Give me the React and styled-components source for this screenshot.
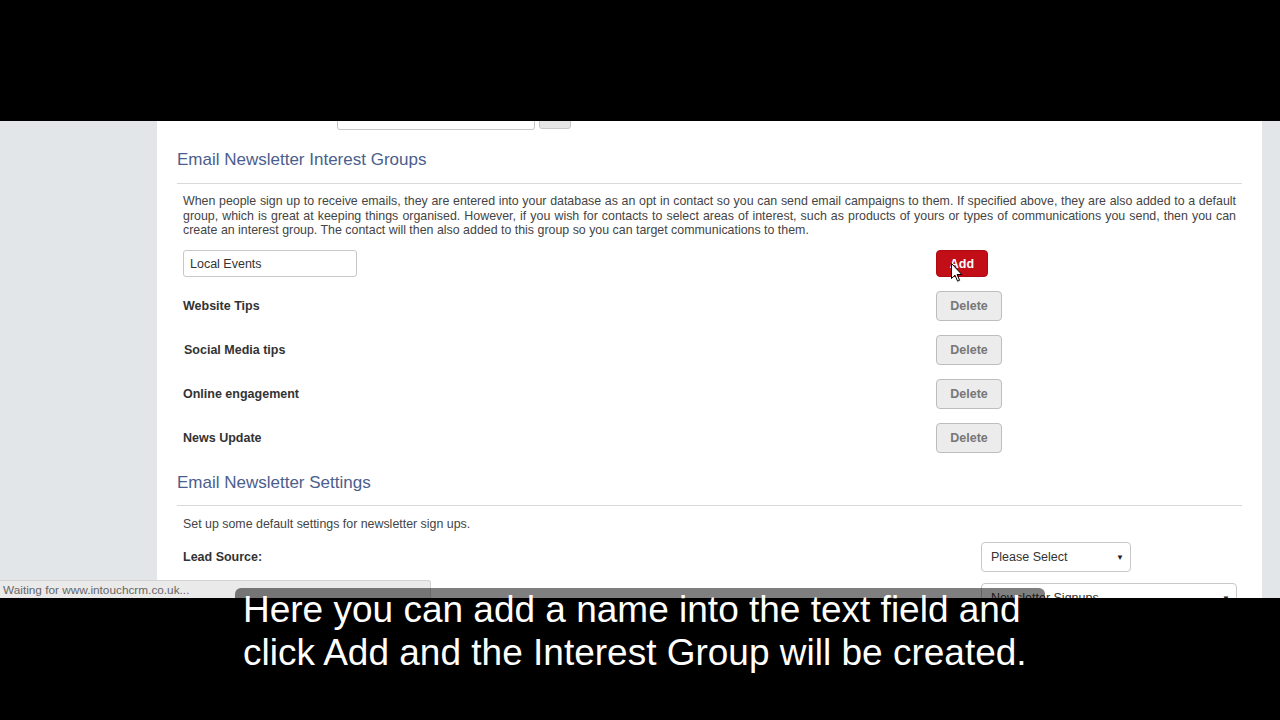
import React from "react"
import styled, { createGlobalStyle } from "styled-components"

const GlobalStyle = createGlobalStyle`
  html, body {
    margin: 0;
    padding: 0;
    background: #000;
  }
  * { box-sizing: border-box; }
`

const Frame = styled.div`
  position: relative;
  width: 1280px;
  height: 720px;
  overflow: hidden;
  display: flex;
  flex-direction: column;
  background: #000;
  font-family: "Liberation Sans", Arial, sans-serif;
`

const TopBar = styled.div`
  height: 121px;
  flex-shrink: 0;
  background: #000;
`

const Viewport = styled.div`
  position: relative;
  height: 477px;
  flex-shrink: 0;
  overflow: hidden;
  background: #e3e6e9;
  display: flex;
`

const Sidebar = styled.div`
  width: 157px;
  flex-shrink: 0;
`

const Panel = styled.div`
  width: 1105px;
  margin-top: -19px;
  background: #fff;
  padding: 0 20px;
  align-self: flex-start;
`

const Row = styled.div`
  display: grid;
  grid-template-columns: ${p => p.$labelWidth || 753}px auto;
  align-items: center;
  padding: 0 6px;
  height: ${p => p.$h || 30}px;
  margin-top: ${p => p.$mt || 0}px;
`

const TopLabel = styled.div`
  font-size: 12.5px;
  font-weight: bold;
  color: #333;
  transform: translateY(-10px);
`

const TopInput = styled.div`
  display: flex;
  gap: 4px;
`

const Heading = styled.h2`
  margin: ${p => p.$mt}px 0 0;
  font-size: 17px;
  line-height: 20px;
  font-weight: normal;
  color: #4b5e8d;
`

const Rule = styled.div`
  height: 1px;
  margin-top: ${p => p.$mt || 13}px;
  background: #d9d9d9;
`

const Para = styled.div`
  margin-top: ${p => p.$mt}px;
  padding: 0 6px;
  font-size: 12.4px;
  line-height: 14.5px;
  color: #444;
`

const Line = styled.div`
  text-align: justify;
  text-align-last: ${p => (p.$last ? "left" : "justify")};
  white-space: nowrap;
`

const TextBox = styled.div`
  width: ${p => p.$w}px;
  height: ${p => p.$h || 27}px;
  border: 1px solid #c8c8c8;
  border-radius: 3px;
  background: #fff;
  font-size: 12.5px;
  color: #333;
  display: flex;
  align-items: center;
  padding: 0 6px;
`

const GreyBtn = styled.div`
  width: 32px;
  height: 27px;
  border: 1px solid #c8c8c8;
  border-radius: 3px;
  background: #e6e6e6;
`

const Label = styled.div`
  font-size: 12.5px;
  font-weight: bold;
  color: #333;
  padding-left: ${p => p.$nudge || 0}px;
`

const Button = styled.div`
  position: relative;
  display: inline-flex;
  align-items: center;
  justify-content: center;
  height: ${p => (p.$primary ? 27 : 30)}px;
  width: ${p => (p.$primary ? 52 : 66)}px;
  border-radius: 4px;
  font-size: 12.5px;
  font-weight: bold;
  background: ${p => (p.$primary ? "#c20e16" : "#ececec")};
  color: ${p => (p.$primary ? "#fff" : "#777")};
  border: 1px solid ${p => (p.$primary ? "#b00a12" : "#bdbdbd")};
`

const Cursor = styled.svg`
  position: absolute;
  left: 14px;
  top: 12px;
`

const Select = styled.div`
  width: ${p => p.$w}px;
  height: 30px;
  border: 1px solid #c8c8c8;
  border-radius: 4px;
  background: #fff;
  display: flex;
  align-items: center;
  justify-content: space-between;
  padding: 0 6px 0 9px;
  font-size: 12.5px;
  color: #333;
`

const Caret = styled.span`
  font-size: 8px;
  color: #222;
`

const StatusBar = styled.div`
  position: absolute;
  left: 0;
  bottom: 0;
  width: 431px;
  height: 18px;
  background: #eaeaea;
  border: 1px solid #d2d2d2;
  border-left: none;
  border-bottom: none;
  border-top-right-radius: 3px;
  font-size: 11.8px;
  color: #666;
  padding: 2px 0 0 3px;
`

const CaptionBar = styled.div`
  flex: 1;
  background: #000;
`

const Caption = styled.div`
  position: absolute;
  left: 235px;
  top: 588px;
  width: 810px;
  padding: 0 8px;
  background: rgba(0, 0, 0, 0.5);
  border-radius: 6px;
  color: #fff;
  font-size: 37px;
  line-height: 43px;
  white-space: nowrap;
  font-family: "Liberation Sans", Arial, sans-serif;
`

const paragraph = [
  "When people sign up to receive emails, they are entered into your database as an opt in contact so you can send email campaigns to them. If specified above, they are also added to a default",
  "group, which is great at keeping things organised. However, if you wish for contacts to select areas of interest, such as products of yours or types of communications you send, then you can",
  "create an interest group. The contact will then also added to this group so you can target communications to them.",
]

const groups = [
  { name: "Website Tips" },
  { name: "Social Media tips", nudge: 1 },
  { name: "Online engagement" },
  { name: "News Update" },
]

function PointerCursor() {
  return (
    <Cursor width="12" height="19" viewBox="0 0 12 19">
      <path d="M0.5 0.5 L0.5 15.5 L4 12.2 L6.6 18.2 L8.6 17.3 L6.1 11.5 L10.8 11.5 Z" fill="#fff" stroke="#000" strokeWidth="1" strokeLinejoin="round" />
    </Cursor>
  )
}

export default function App() {
  return (
    <Frame>
      <GlobalStyle />
      <TopBar />
      <Viewport>
        <Sidebar />
        <Panel>
          <Row $h={28} $labelWidth={154}>
            <TopLabel>Display Name:</TopLabel>
            <TopInput>
              <TextBox $w={198} $h={28} />
              <GreyBtn />
            </TopInput>
          </Row>

          <Heading $mt={20}>Email Newsletter Interest Groups</Heading>
          <Rule $mt={13} />
          <Para $mt={10}>
            {paragraph.map((l, i) => (
              <Line key={i} $last={i === paragraph.length - 1}>{l}</Line>
            ))}
          </Para>

          <Row $h={28} $mt={12}>
            <TextBox $w={174}>Local Events</TextBox>
            <Button $primary>
              Add
              <PointerCursor />
            </Button>
          </Row>

          {groups.map((g, i) => (
            <Row key={g.name} $mt={i === 0 ? 13 : 14}>
              <Label $nudge={g.nudge}>{g.name}</Label>
              <Button>Delete</Button>
            </Row>
          ))}

          <Heading $mt={20}>Email Newsletter Settings</Heading>
          <Rule $mt={12} />
          <Para $mt={11}>
            <Line $last>Set up some default settings for newsletter sign ups.</Line>
          </Para>

          <Row $mt={11} $labelWidth={798}>
            <Label>Lead Source:</Label>
            <Select $w={150}>
              Please Select <Caret>▼</Caret>
            </Select>
          </Row>
          <Row $mt={11} $labelWidth={798}>
            <Label>Group:</Label>
            <Select $w={256}>
              Newsletter Signups <Caret>▼</Caret>
            </Select>
          </Row>
        </Panel>
        <StatusBar>Waiting for www.intouchcrm.co.uk...</StatusBar>
      </Viewport>
      <CaptionBar />
      <Caption>
        Here you can add a name into the text field and
        <br />
        click Add and the Interest Group will be created.
      </Caption>
    </Frame>
  )
}
